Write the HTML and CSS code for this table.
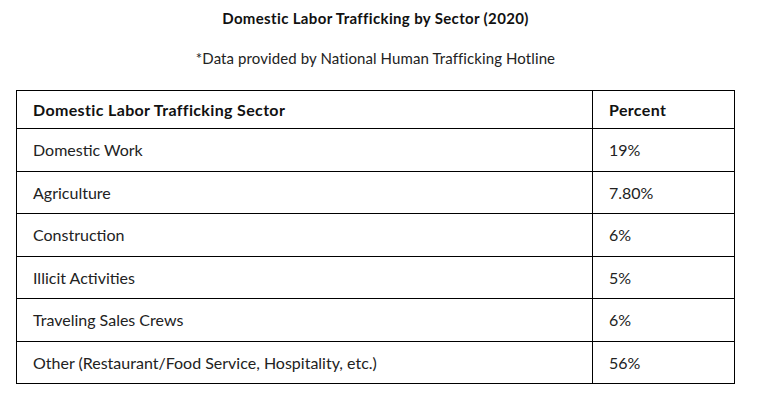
FILE: index.html
```html
<!DOCTYPE html>
<html>
<head>
<meta charset="utf-8">
<link rel="stylesheet" href="styles.css">
</head>
<body>
<div class="wrap">
  <h2 class="title">Domestic Labor Trafficking by Sector (2020)</h2>
  <p class="note">*Data provided by National Human Trafficking Hotline</p>
  <table class="data">
    <thead>
      <tr><th class="c1">Domestic Labor Trafficking Sector</th><th>Percent</th></tr>
    </thead>
    <tbody>
      <tr><td>Domestic Work</td><td>19%</td></tr>
      <tr><td>Agriculture</td><td>7.80%</td></tr>
      <tr><td>Construction</td><td>6%</td></tr>
      <tr><td>Illicit Activities</td><td>5%</td></tr>
      <tr><td>Traveling Sales Crews</td><td>6%</td></tr>
      <tr><td>Other (Restaurant/Food Service, Hospitality, etc.)</td><td>56%</td></tr>
    </tbody>
  </table>
</div>
</body>
</html>
```
FILE: styles.css
```css
html, body {
  margin: 0;
  padding: 0;
  background: #fff;
}
body {
  font-family: "Lato", "Open Sans", sans-serif;
  color: #222;
}
.wrap {
  width: 719px;
  margin-left: 16px;
  padding-top: 8px;
}
.title {
  margin: 0;
  text-align: center;
  font-size: 15px;
  font-weight: 700;
  line-height: 20px;
  letter-spacing: 0.35px;
  color: #111;
}
.note {
  margin: 20px 0 0;
  text-align: center;
  font-size: 15px;
  line-height: 20px;
  letter-spacing: 0.1px;
}
.data {
  margin-top: 22px;
  width: 719px;
  border-collapse: collapse;
  border: 1px solid #000;
}
.data th, .data td {
  border: 1px solid #000;
  text-align: left;
  padding: 0 16px;
  font-size: 16px;
}
.data th {
  height: 37px;
  font-weight: 700;
  letter-spacing: 0.35px;
  color: #111;
}
.data td {
  height: 41.5px;
}
.data .c1 {
  width: 543px;
}
```
